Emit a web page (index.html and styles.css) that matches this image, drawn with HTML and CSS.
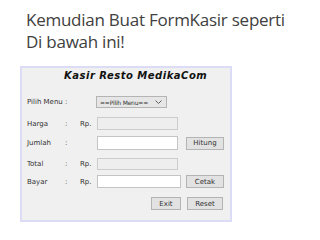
FILE: index.html
```html
<!DOCTYPE html>
<html>
<head>
<meta charset="utf-8">
<link rel="stylesheet" href="styles.css">
</head>
<body>
<h1 class="heading">Kemudian Buat FormKasir seperti<br>Di bawah ini!</h1>
<div class="panel">
  <div class="title">Kasir Resto MedikaCom</div>
  <div class="row row-menu">
    <span class="lbl">Pilih Menu</span><span class="colon">:</span><span class="rp"></span>
    <span class="select"><span class="sel-text">==Pilih Menu==</span><svg class="chev" width="7" height="4" viewBox="0 0 7 4"><path d="M0.5 0.5 L3.5 3.5 L6.5 0.5" fill="none" stroke="#606060" stroke-width="1"/></svg></span>
  </div>
  <div class="row row-harga">
    <span class="lbl">Harga</span><span class="colon">:</span><span class="rp">Rp.</span>
    <span class="field dis"></span>
  </div>
  <div class="row row-jumlah">
    <span class="lbl">Jumlah</span><span class="colon">:</span><span class="rp"></span>
    <span class="field"></span><span class="btn btn-side">Hitung</span>
  </div>
  <div class="row row-total">
    <span class="lbl">Total</span><span class="colon">:</span><span class="rp">Rp.</span>
    <span class="field dis"></span>
  </div>
  <div class="row row-bayar">
    <span class="lbl">Bayar</span><span class="colon">:</span><span class="rp">Rp.</span>
    <span class="field wide"></span><span class="btn btn-side btn-near">Cetak</span>
  </div>
  <div class="row row-actions">
    <span class="btn btn-exit">Exit</span><span class="btn btn-reset">Reset</span>
  </div>
</div>
</body>
</html>
```
FILE: styles.css
```css
html, body {
  margin: 0;
  padding: 0;
  background: #ffffff;
}
body {
  width: 320px;
  height: 240px;
  overflow: hidden;
}
.heading {
  margin: 0;
  padding: 9px 0 0 26px;
  font-family: "Open Sans", sans-serif;
  font-weight: normal;
  font-size: 17px;
  line-height: 22px;
  color: #404040;
  letter-spacing: -0.25px;
  white-space: nowrap;
}
.panel {
  margin: 13px 0 0 20px;
  width: 208px;
  height: 152px;
  border: 2px solid #dcdcf6;
  background: #f0f0f0;
  padding: 0;
  font-family: "DejaVu Sans", sans-serif;
  font-size: 7px;
  color: #333333;
}
.title {
  height: 14px;
  margin-top: 1px;
  padding-left: 42px;
  font-family: "DejaVu Sans", sans-serif;
  font-weight: bold;
  font-style: italic;
  font-size: 10px;
  line-height: 14px;
  color: #111111;
  letter-spacing: 0.5px;
  white-space: nowrap;
}
.row {
  display: flex;
  align-items: center;
  height: 13px;
  padding-left: 5px;
  white-space: nowrap;
}
.row-menu { margin-top: 13px; height: 12px; }
.row-harga { margin-top: 9px; }
.row-jumlah { margin-top: 6px; height: 14px; }
.row-total { margin-top: 8px; height: 12px; }
.row-bayar { margin-top: 5px; }
.row-actions { margin-top: 9px; justify-content: flex-end; padding-right: 7px; }
.lbl { width: 38px; }
.colon { width: 15px; }
.rp { width: 17px; }
.select {
  box-sizing: border-box;
  margin-left: -1px;
  width: 71px;
  height: 12px;
  border: 1px solid #b4b4b4;
  background: #e6e6e6;
  display: flex;
  align-items: center;
  padding-left: 3px;
  color: #333333;
}
.sel-text { font-size: 6px; letter-spacing: -0.2px; white-space: nowrap; }
.chev { margin-left: auto; margin-right: 4px; flex: none; }
.field {
  box-sizing: border-box;
  width: 81px;
  height: 100%;
  border: 1px solid #c4c4c4;
  background: #ffffff;
}
.field.dis {
  background: #eeeeee;
  border-color: #cccccc;
}
.field.wide { width: 84px; }
.btn {
  box-sizing: border-box;
  height: 13px;
  border: 1px solid #b4b4b4;
  background: #e2e2e2;
  display: flex;
  align-items: center;
  justify-content: center;
  font-size: 7px;
  color: #333333;
}
.btn-side { width: 38px; margin-left: 8px; }
.btn-near { margin-left: 5px; }
.btn-exit { width: 30px; }
.btn-reset { width: 36px; margin-left: 6px; }
```
